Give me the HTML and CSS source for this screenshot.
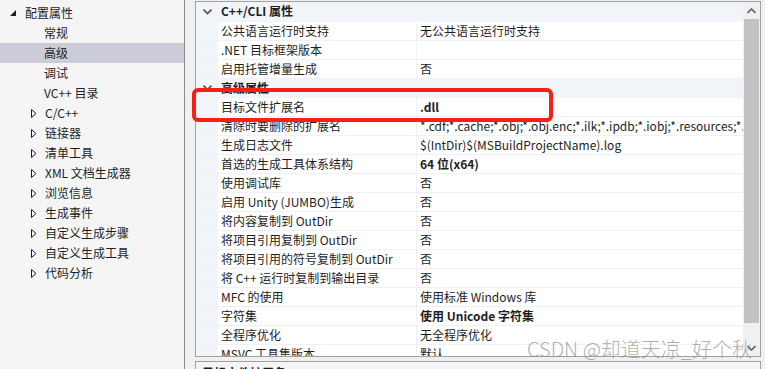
FILE: index.html
```html
<!DOCTYPE html>
<html lang="zh-CN">
<head>
    <meta charset="UTF-8">
    <title>属性页</title>
    <link rel="stylesheet" href="styles.css">
</head>
<body>
    <div class="page">
        <!-- 左侧树 -->
        <div class="tree">
            <div class="node root">
                <svg class="arrow" width="7" height="7" viewBox="0 0 7 7"><path d="M6 0 L6 6 L0 6 Z" fill="#1e1e1e"/></svg>
                <span>配置属性</span>
            </div>
            <div class="node child">常规</div>
            <div class="node child selected">高级</div>
            <div class="node child">调试</div>
            <div class="node child">VC++ 目录</div>
            <div class="node group"><svg class="arrow" width="6" height="9" viewBox="0 0 6 9"><path d="M0.5 0.5 L5 4.5 L0.5 8.5 Z" fill="none" stroke="#1e1e1e"/></svg><span>C/C++</span></div>
            <div class="node group"><svg class="arrow" width="6" height="9" viewBox="0 0 6 9"><path d="M0.5 0.5 L5 4.5 L0.5 8.5 Z" fill="none" stroke="#1e1e1e"/></svg><span>链接器</span></div>
            <div class="node group"><svg class="arrow" width="6" height="9" viewBox="0 0 6 9"><path d="M0.5 0.5 L5 4.5 L0.5 8.5 Z" fill="none" stroke="#1e1e1e"/></svg><span>清单工具</span></div>
            <div class="node group"><svg class="arrow" width="6" height="9" viewBox="0 0 6 9"><path d="M0.5 0.5 L5 4.5 L0.5 8.5 Z" fill="none" stroke="#1e1e1e"/></svg><span>XML 文档生成器</span></div>
            <div class="node group"><svg class="arrow" width="6" height="9" viewBox="0 0 6 9"><path d="M0.5 0.5 L5 4.5 L0.5 8.5 Z" fill="none" stroke="#1e1e1e"/></svg><span>浏览信息</span></div>
            <div class="node group"><svg class="arrow" width="6" height="9" viewBox="0 0 6 9"><path d="M0.5 0.5 L5 4.5 L0.5 8.5 Z" fill="none" stroke="#1e1e1e"/></svg><span>生成事件</span></div>
            <div class="node group"><svg class="arrow" width="6" height="9" viewBox="0 0 6 9"><path d="M0.5 0.5 L5 4.5 L0.5 8.5 Z" fill="none" stroke="#1e1e1e"/></svg><span>自定义生成步骤</span></div>
            <div class="node group"><svg class="arrow" width="6" height="9" viewBox="0 0 6 9"><path d="M0.5 0.5 L5 4.5 L0.5 8.5 Z" fill="none" stroke="#1e1e1e"/></svg><span>自定义生成工具</span></div>
            <div class="node group"><svg class="arrow" width="6" height="9" viewBox="0 0 6 9"><path d="M0.5 0.5 L5 4.5 L0.5 8.5 Z" fill="none" stroke="#1e1e1e"/></svg><span>代码分析</span></div>
        </div>

        <!-- 右侧属性表 -->
        <div class="right">
            <div class="grid-box">
                <div class="grid">
                    <div class="row header">
                        <div class="gutter"><svg width="9" height="6" viewBox="0 0 9 6"><path d="M0.5 0.5 L4.5 4.5 L8.5 0.5" fill="none" stroke="#555" stroke-width="1.6"/></svg></div>
                        <div class="cat">C++/CLI 属性</div>
                    </div>
                    <div class="row"><div class="gutter"></div><div class="name">公共语言运行时支持</div><div class="value">无公共语言运行时支持</div></div>
                    <div class="row"><div class="gutter"></div><div class="name">.NET 目标框架版本</div><div class="value"></div></div>
                    <div class="row"><div class="gutter"></div><div class="name">启用托管增量生成</div><div class="value">否</div></div>
                    <div class="row header">
                        <div class="gutter"><svg width="9" height="6" viewBox="0 0 9 6"><path d="M0.5 0.5 L4.5 4.5 L8.5 0.5" fill="none" stroke="#555" stroke-width="1.6"/></svg></div>
                        <div class="cat">高级属性</div>
                    </div>
                    <div class="row"><div class="gutter"></div><div class="name">目标文件扩展名</div><div class="value bold">.dll</div></div>
                    <div class="row"><div class="gutter"></div><div class="name">清除时要删除的扩展名</div><div class="value">*.cdf;*.cache;*.obj;*.obj.enc;*.ilk;*.ipdb;*.iobj;*.resources;*.tlb;*.tli;*.tlh;*.tmp;*.rsp;*.pgc;*.pgd;*.meta;*.tlog;*.manifest;*.res;*.pch;*.exp;*.idb;*.rep;*.xdc;*.pdb;*_manifest.rc;*.bsc;*.sbr;*.xml;*.metagen;*.bi</div></div>
                    <div class="row"><div class="gutter"></div><div class="name">生成日志文件</div><div class="value">$(IntDir)$(MSBuildProjectName).log</div></div>
                    <div class="row"><div class="gutter"></div><div class="name">首选的生成工具体系结构</div><div class="value bold">64 位(x64)</div></div>
                    <div class="row"><div class="gutter"></div><div class="name">使用调试库</div><div class="value">否</div></div>
                    <div class="row"><div class="gutter"></div><div class="name">启用 Unity (JUMBO)生成</div><div class="value">否</div></div>
                    <div class="row"><div class="gutter"></div><div class="name">将内容复制到 OutDir</div><div class="value">否</div></div>
                    <div class="row"><div class="gutter"></div><div class="name">将项目引用复制到 OutDir</div><div class="value">否</div></div>
                    <div class="row"><div class="gutter"></div><div class="name">将项目引用的符号复制到 OutDir</div><div class="value">否</div></div>
                    <div class="row"><div class="gutter"></div><div class="name">将 C++ 运行时复制到输出目录</div><div class="value">否</div></div>
                    <div class="row"><div class="gutter"></div><div class="name">MFC 的使用</div><div class="value">使用标准 Windows 库</div></div>
                    <div class="row"><div class="gutter"></div><div class="name">字符集</div><div class="value bold">使用 Unicode 字符集</div></div>
                    <div class="row"><div class="gutter"></div><div class="name">全程序优化</div><div class="value">无全程序优化</div></div>
                    <div class="row"><div class="gutter"></div><div class="name">MSVC 工具集版本</div><div class="value">默认</div></div>
                </div>
                <div class="scrollbar">
                    <div class="sb-btn"><svg width="9" height="6" viewBox="0 0 9 6"><path d="M0.5 5 L4.5 1 L8.5 5" fill="none" stroke="#606060" stroke-width="1.6"/></svg></div>
                    <div class="sb-thumb"></div>
                    <div class="sb-track"></div>
                    <div class="sb-btn"><svg width="9" height="6" viewBox="0 0 9 6"><path d="M0.5 1 L4.5 5 L8.5 1" fill="none" stroke="#606060" stroke-width="1.6"/></svg></div>
                </div>
                <!-- 红色标注框 -->
                <div class="mark"></div>
            </div>
            <div class="desc-box">
                <div class="desc-title">目标文件扩展名</div>
            </div>
        </div>
    </div>
    <div class="watermark">CSDN @却道天凉_好个秋</div>
</body>
</html>
```

FILE: styles.css
```css
body {
    margin: 0;
    background: #f0f0f0;
    font-family: "Noto Sans CJK SC", "Noto Sans", sans-serif;
    font-size: 12px;
    color: #1e1e1e;
    overflow: hidden;
}
.page {
    display: flex;
    height: 369px;
}
.tree {
    width: 184px;
    flex: none;
    background: #f5f5f5;
    border-right: 1px solid #8c8c90;
    padding-top: 3px;
}
.node {
    height: 20px;
    line-height: 20px;
    display: flex;
    align-items: center;
    white-space: nowrap;
}
.node.root {
    padding-left: 10px;
}
.node.root .arrow {
    margin-right: 8px;
}
.node.child {
    padding-left: 44px;
}
.node.group {
    padding-left: 31px;
}
.node.group .arrow {
    margin-right: 8px;
}
.node.selected {
    background: #cbccd8;
}
.right {
    flex: 1;
    min-width: 0;
    display: flex;
    flex-direction: column;
    padding: 1px 4px 0 10px;
    gap: 4px;
}
.grid-box {
    position: relative;
    height: 354px;
    flex: none;
    border: 1px solid #a0a0a0;
    background: #ffffff;
    display: flex;
}
.grid {
    flex: 1;
    overflow: hidden;
    min-width: 0;
}
.row {
    display: flex;
    height: 18px;
    border-bottom: 1px solid #eef1f5;
    line-height: 18px;
}
.gutter {
    width: 22px;
    flex: none;
    background: #f1f4f9;
    display: flex;
    justify-content: center;
    align-items: center;
}
.row.header {
    background: #f1f4f9;
    border-bottom-color: #f1f4f9;
}
.row.header:first-child {
    height: 19px;
}
.cat {
    padding-left: 3px;
    font-weight: bold;
}
.name {
    width: 195px;
    flex: none;
    padding-left: 3px;
    border-right: 1px solid #eef1f5;
    white-space: nowrap;
    overflow: hidden;
}
.value {
    flex: 1;
    min-width: 0;
    padding-left: 3px;
    white-space: nowrap;
    overflow: hidden;
}
.bold {
    font-weight: bold;
}
.scrollbar {
    width: 17px;
    flex: none;
    background: #f0f0f0;
    display: flex;
    flex-direction: column;
}
.sb-btn {
    height: 17px;
    display: flex;
    justify-content: center;
    align-items: center;
}
.sb-thumb {
    height: 304px;
    margin: 0 1px;
    background: #c2c2c2;
}
.sb-track {
    flex: 1;
}
.mark {
    position: absolute;
    left: -4px;
    top: 86px;
    width: 353px;
    height: 26px;
    border: 4px solid #fa1e14;
    border-radius: 6px;
}
.desc-box {
    flex: 1;
    border: 1px solid #a0a0a0;
    border-bottom: none;
    background: #f5f5f5;
    padding: 2px 6px;
}
.desc-title {
    font-weight: bold;
}
.watermark {
    position: absolute;
    left: 527px;
    top: 334px;
    font-size: 20px;
    font-weight: 300;
    color: rgba(140, 140, 140, 0.7);
    white-space: nowrap;
}
```
